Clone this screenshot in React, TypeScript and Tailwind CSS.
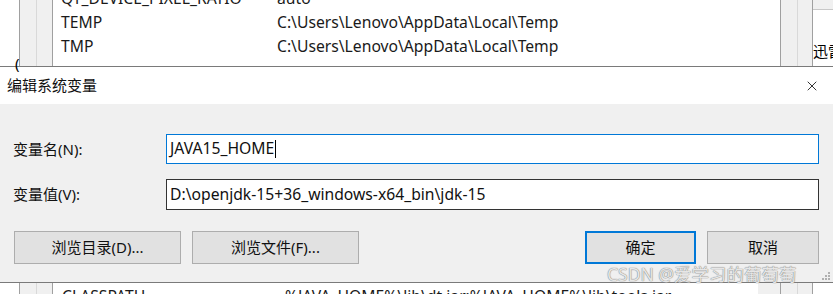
import { X } from "lucide-react";

const topRows = [
  { name: "QT_DEVICE_PIXEL_RATIO", value: "auto" },
  { name: "TEMP", value: "C:\\Users\\Lenovo\\AppData\\Local\\Temp" },
  { name: "TMP", value: "C:\\Users\\Lenovo\\AppData\\Local\\Temp" },
];

const ListStrip = ({ children, bottom }: { children: React.ReactNode; bottom?: boolean }) => (
  <div className="flex h-full">
    <div className="w-[19px] bg-white relative">
      {!bottom && <span className="absolute left-[15px] bottom-[-5px] text-[15px] leading-none">(</span>}
    </div>
    <div className="w-[17px] bg-[#f0f0f0] border-l border-[#a0a0a0]" />
    <div className="w-[16px] bg-[#f0f0f0] border-l border-[#d9d9d9]" />
    <div className="flex-1 bg-white border-l border-r border-[#a0a0a0] overflow-hidden relative">{children}</div>
    <div className="w-[16px] bg-[#f0f0f0]" />
    <div className="w-[15px] bg-[#f0f0f0] border-l border-[#d9d9d9]" />
    <div className="w-[21px] bg-white border-l border-[#a0a0a0] flex flex-col overflow-hidden">
      {!bottom && (
        <>
          <div className="h-[10px] bg-[#f0f0f0] border-b border-[#c8c8c8]" />
          <div className="pt-[34px] text-[15px] leading-none whitespace-nowrap">迅雷</div>
        </>
      )}
    </div>
  </div>
);

const Row = ({ name, value }: { name: string; value: string }) => (
  <div className="flex h-[24px] items-center whitespace-nowrap text-[15.7px] text-[#1a1a1a]">
    <div className="w-[224px] pl-[8px]">{name}</div>
    <div>{value}</div>
  </div>
);

const Btn = ({ label, w, primary }: { label: string; w: string; primary?: boolean }) => (
  <div
    className={`${w} h-[33px] bg-[#e1e1e1] flex items-center justify-center text-[15px] text-[#111] ${
      primary ? "border-2 border-[#0078d7]" : "border border-[#adadad]"
    }`}
  >
    {label}
  </div>
);

export default function App() {
  return (
    <div
      className="w-[833px] h-[294px] overflow-hidden relative bg-white text-black flex flex-col"
      style={{ fontFamily: '"Noto Sans", "Noto Sans CJK SC", sans-serif' }}
    >
      {/* window behind */}
      <div className="h-[66px] shrink-0">
        <ListStrip>
          <div className="-mt-[13px]">
            {topRows.map((r) => (
              <Row key={r.name} name={r.name} value={r.value} />
            ))}
          </div>
        </ListStrip>
      </div>

      {/* dialog */}
      <div className="shrink-0 border-t border-[#7a7a7a] h-[38px] bg-white flex items-center justify-between pl-[7px] pr-[13px]">
        <span className="text-[15px] text-[#111]">编辑系统变量</span>
        <X className="w-[16px] h-[16px] text-black" strokeWidth={1.2} />
      </div>

      <div className="shrink-0 h-[178px] bg-[#f0f0f0] pt-[30px] pl-[13px] pr-[14px] flex flex-col">
        <div className="flex items-center h-[30px]">
          <div className="w-[153px] text-[15px] text-[#111]">变量名(N):</div>
          <div className="flex-1 h-[30px] bg-white border border-[#0078d7] flex items-center pl-[3px] text-[15.7px] text-[#111]">
            JAVA15_HOME<span className="w-px h-[18px] bg-black ml-px" />
          </div>
        </div>
        <div className="flex items-center h-[31px] mt-[15px]">
          <div className="w-[153px] text-[15px] text-[#111]">变量值(V):</div>
          <div className="flex-1 h-[31px] bg-white border border-[#333] flex items-center pl-[3px] text-[15.7px] text-[#111]">
            D:\openjdk-15+36_windows-x64_bin\jdk-15
          </div>
        </div>
        <div className="flex mt-[21px] pl-[1px]">
          <Btn label="浏览目录(D)..." w="w-[167px]" />
          <div className="w-[11px]" />
          <Btn label="浏览文件(F)..." w="w-[167px]" />
          <div className="flex-1" />
          <Btn label="确定" w="w-[111px]" primary />
          <div className="w-[11px]" />
          <Btn label="取消" w="w-[112px]" />
        </div>
      </div>

      {/* window behind, below */}
      <div className="flex-1 min-h-0 overflow-hidden border-t border-[#7a7a7a]">
        <ListStrip bottom>
          <div className="pt-[2px]">
            <div className="flex h-[24px] items-center whitespace-nowrap text-[15.7px] text-[#1a1a1a]">
              <div className="w-[232px] pl-[9px]">CLASSPATH</div>
              <div>%JAVA_HOME%\lib\dt.jar;%JAVA_HOME%\lib\tools.jar</div>
            </div>
          </div>
          <div className="absolute right-0 top-0 bottom-0 w-[22px] bg-[#f0f0f0]" />
        </ListStrip>
      </div>

      {/* watermark */}
      <div className="absolute left-[607px] top-[264px] text-[17.5px] leading-[20px] whitespace-nowrap text-[#e6e6e6] [text-shadow:0_0_1px_#777,0_0_1px_#999]">
        CSDN @爱学习的葡萄萄
      </div>
      <svg className="absolute left-[821px] top-[270px]" width="10" height="12" viewBox="0 0 10 12">
        {[
          [7, 2], [7, 5], [4, 5], [7, 8], [4, 8], [1, 8],
        ].map(([x, y], i) => (
          <rect key={i} x={x} y={y} width="2" height="2" fill="#b0b0b0" />
        ))}
      </svg>
    </div>
  );
}
